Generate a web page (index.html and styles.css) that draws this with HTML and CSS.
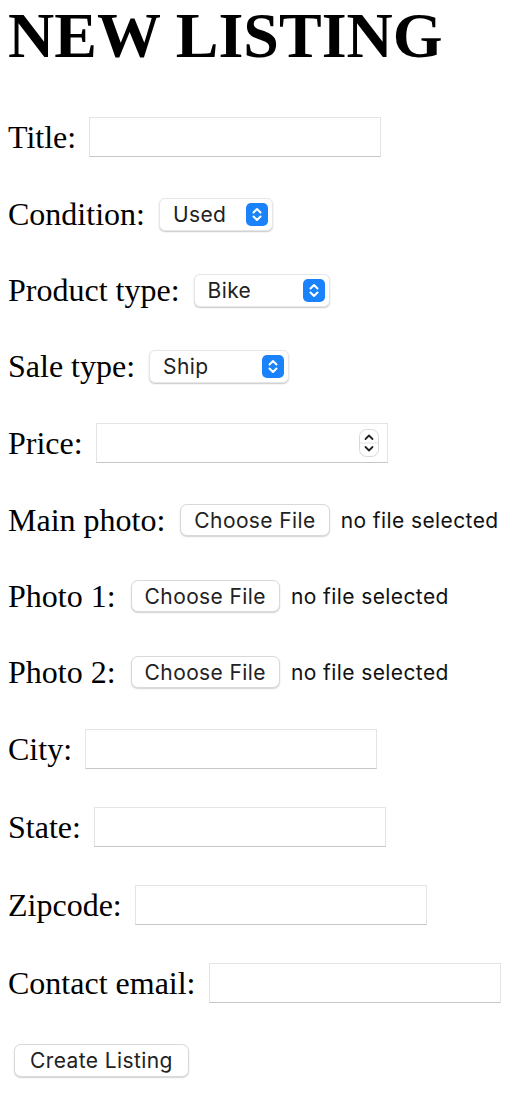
FILE: index.html
```html
<!doctype html>
<html>
  <head>
    <title>New Listing</title>
    <link rel="stylesheet" href="styles.css">
  </head>
  <body>
    <h1>NEW LISTING</h1>
    <form class="listing">
      <div class="field text">
        <label for="title">Title:</label>
        <input id="title" type="text">
      </div>
      <div class="field">
        <label for="condition">Condition:</label>
        <span class="select" style="width: 114px;">
          <select id="condition">
            <option>Used</option>
            <option>New</option>
          </select>
          <svg class="chevron" viewBox="0 0 22 23"><rect width="22" height="23" rx="5" fill="#1a82fb"/><path d="M7.5 9.5 L11 6 L14.5 9.5 M7.5 13.5 L11 17 L14.5 13.5" fill="none" stroke="#fff" stroke-width="2" stroke-linecap="round" stroke-linejoin="round"/></svg>
        </span>
      </div>
      <div class="field">
        <label for="product">Product type:</label>
        <span class="select" style="width: 136px;">
          <select id="product">
            <option>Bike</option>
            <option>Part</option>
          </select>
          <svg class="chevron" viewBox="0 0 22 23"><rect width="22" height="23" rx="5" fill="#1a82fb"/><path d="M7.5 9.5 L11 6 L14.5 9.5 M7.5 13.5 L11 17 L14.5 13.5" fill="none" stroke="#fff" stroke-width="2" stroke-linecap="round" stroke-linejoin="round"/></svg>
        </span>
      </div>
      <div class="field">
        <label for="sale">Sale type:</label>
        <span class="select" style="width: 140px;">
          <select id="sale">
            <option>Ship</option>
            <option>Local</option>
          </select>
          <svg class="chevron" viewBox="0 0 22 23"><rect width="22" height="23" rx="5" fill="#1a82fb"/><path d="M7.5 9.5 L11 6 L14.5 9.5 M7.5 13.5 L11 17 L14.5 13.5" fill="none" stroke="#fff" stroke-width="2" stroke-linecap="round" stroke-linejoin="round"/></svg>
        </span>
      </div>
      <div class="field text">
        <label for="price">Price:</label>
        <span class="number">
          <input id="price" type="text">
          <svg class="spin" viewBox="0 0 20 28"><rect x="0.5" y="0.5" width="19" height="27" rx="7" fill="#fff" stroke="#d8d8d8"/><line x1="1" y1="14" x2="19" y2="14" stroke="#e2e2e2"/><path d="M6.5 10 L10 6.5 L13.5 10 M6.5 18 L10 21.5 L13.5 18" fill="none" stroke="#222" stroke-width="1.8" stroke-linecap="round" stroke-linejoin="round"/></svg>
        </span>
      </div>
      <div class="field">
        <label>Main photo:</label>
        <span class="file"><button type="button">Choose File</button><span>no file selected</span></span>
      </div>
      <div class="field">
        <label>Photo 1:</label>
        <span class="file"><button type="button">Choose File</button><span>no file selected</span></span>
      </div>
      <div class="field">
        <label>Photo 2:</label>
        <span class="file"><button type="button">Choose File</button><span>no file selected</span></span>
      </div>
      <div class="field text">
        <label for="city">City:</label>
        <input id="city" type="text">
      </div>
      <div class="field text">
        <label for="state">State:</label>
        <input id="state" type="text">
      </div>
      <div class="field text">
        <label for="zip">Zipcode:</label>
        <input id="zip" type="text">
      </div>
      <div class="field text">
        <label for="email">Contact email:</label>
        <input id="email" type="text">
      </div>
      <div class="field">
        <button class="submit" type="button">Create Listing</button>
      </div>
    </form>
  </body>
</html>
```

FILE: styles.css
```css
body {
  margin: 0 8px;
  font-family: "Liberation Serif", "Times New Roman", serif;
  color: #000;
  background: #fff;
}

h1 {
  margin: 0;
  font-size: 64px;
  line-height: 72px;
  font-weight: bold;
}

.listing {
  margin-top: 45px;
  display: flex;
  flex-direction: column;
  gap: 38px;
}

.field {
  display: flex;
  align-items: center;
  gap: 13px;
  min-height: 38px;
  font-size: 32px;
}

.field.text { min-height: 40px; }

input, select, button {
  font-family: Inter, "Liberation Sans", sans-serif;
  font-size: 21px;
  letter-spacing: 0.4px;
  color: #222;
}

input[type="text"] {
  display: block;
  box-sizing: border-box;
  width: 292px;
  height: 40px;
  margin: 0;
  padding: 0 8px;
  border: 1px solid #e4e4e4;
  border-bottom-color: #c6c6c6;
  border-radius: 0;
  background: #fff;
  outline: none;
}

.select {
  position: relative;
  display: block;
  height: 33px;
  margin-left: 1px;
}

.select select {
  display: block;
  -webkit-appearance: none;
  appearance: none;
  box-sizing: border-box;
  width: 100%;
  height: 100%;
  margin: 0;
  padding: 0 36px 0 13px;
  border: 1px solid #e6e6e6;
  border-radius: 6px;
  background: #fff;
  box-shadow: 0 1px 1.5px rgba(0, 0, 0, 0.22);
  outline: none;
}

.chevron {
  position: absolute;
  right: 5px;
  top: 5px;
  width: 22px;
  height: 23px;
  pointer-events: none;
}

.number {
  position: relative;
  display: block;
  height: 40px;
}

.spin {
  position: absolute;
  right: 9px;
  top: 6px;
  width: 20px;
  height: 28px;
}

.file {
  display: flex;
  align-items: center;
  gap: 11px;
  margin-left: 2px;
  font-family: Inter, "Liberation Sans", sans-serif;
  font-size: 21px;
  letter-spacing: 0.4px;
  color: #111;
}

button {
  box-sizing: border-box;
  height: 32px;
  margin: 0;
  padding: 0 13px;
  border: 1px solid #d9d9d9;
  border-radius: 7px;
  background: #fff;
  box-shadow: 0 1px 1.5px rgba(0, 0, 0, 0.18);
}

.submit {
  margin-left: 6px;
  height: 33px;
  padding: 0 15px;
}
```
